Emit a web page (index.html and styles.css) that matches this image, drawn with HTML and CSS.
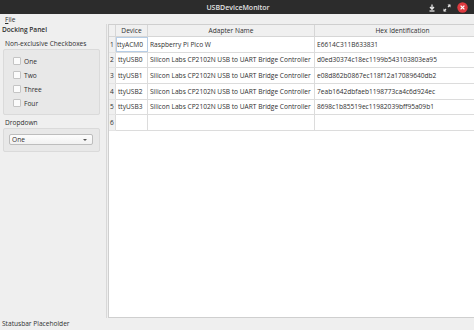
FILE: index.html
```html
<html>
<head>
    <link rel="stylesheet" href="styles.css">
</head>
<body>
    <div class="titlebar">
        <span class="title">USBDeviceMonitor</span>
        <div class="window-buttons">
            <svg class="wbtn" width="10" height="10" viewBox="0 0 10 10">
                <path d="M5 1.5 V6 M3 4 L5 6.2 L7 4" stroke="#e6e6e6" stroke-width="1.3" fill="none"/>
                <path d="M2.5 8 H7.5" stroke="#e6e6e6" stroke-width="1.3"/>
            </svg>
            <svg class="wbtn" width="10" height="10" viewBox="0 0 10 10">
                <path d="M5.5 1.5 H8.5 V4.5 Z M4.5 8.5 H1.5 V5.5 Z" fill="#e6e6e6"/>
                <path d="M8 2 L6 4 M2 8 L4 6" stroke="#e6e6e6" stroke-width="1.2"/>
            </svg>
            <svg class="wbtn" width="11" height="11" viewBox="0 0 11 11">
                <circle cx="5.5" cy="5.5" r="5.2" fill="#de3a3f"/>
                <path d="M3.6 3.6 L7.4 7.4 M7.4 3.6 L3.6 7.4" stroke="#fff" stroke-width="1.3"/>
            </svg>
        </div>
    </div>

    <div class="menubar"><span class="menu-item"><u>F</u>ile</span></div>

    <div class="main">
        <div class="dock">
            <div class="dock-title">Docking Panel</div>

            <div class="group-label">Non-exclusive Checkboxes</div>
            <div class="group checks">
                <label class="check"><span class="box"></span>One</label>
                <label class="check"><span class="box"></span>Two</label>
                <label class="check"><span class="box"></span>Three</label>
                <label class="check"><span class="box"></span>Four</label>
            </div>

            <div class="group-label">Dropdown</div>
            <div class="group combo-group">
                <div class="combo">
                    <span>One</span>
                    <span class="arrow"></span>
                </div>
            </div>
        </div>

        <div class="table-wrap">
            <table class="devices">
                <thead>
                    <tr>
                        <th class="rownum"></th>
                        <th class="col-device">Device</th>
                        <th class="col-name">Adapter Name</th>
                        <th class="col-hex">Hex Identification</th>
                    </tr>
                </thead>
                <tbody>
                    <tr>
                        <td class="rownum">1</td>
                        <td class="current">ttyACM0</td>
                        <td>Raspberry Pi Pico W</td>
                        <td>E6614C311B633831</td>
                    </tr>
                    <tr>
                        <td class="rownum">2</td>
                        <td>ttyUSB0</td>
                        <td>Silicon Labs CP2102N USB to UART Bridge Controller</td>
                        <td>d0ed30374c18ec1199b543103803ea95</td>
                    </tr>
                    <tr>
                        <td class="rownum">3</td>
                        <td>ttyUSB1</td>
                        <td>Silicon Labs CP2102N USB to UART Bridge Controller</td>
                        <td>e08d862b0867ec118f12a17089640db2</td>
                    </tr>
                    <tr>
                        <td class="rownum">4</td>
                        <td>ttyUSB2</td>
                        <td>Silicon Labs CP2102N USB to UART Bridge Controller</td>
                        <td>7eab1642dbfaeb1198773ca4c6d924ec</td>
                    </tr>
                    <tr>
                        <td class="rownum">5</td>
                        <td>ttyUSB3</td>
                        <td>Silicon Labs CP2102N USB to UART Bridge Controller</td>
                        <td>8698c1b85519ec11982039bff95a09b1</td>
                    </tr>
                    <tr>
                        <td class="rownum">6</td>
                        <td></td>
                        <td></td>
                        <td></td>
                    </tr>
                </tbody>
            </table>
        </div>
    </div>

    <div class="statusbar">Statusbar Placeholder</div>
</body>
</html>
```

FILE: styles.css
```css
body {
    margin: 0;
    width: 474px;
    height: 330px;
    overflow: hidden;
    font-family: "Open Sans", "Noto Sans", sans-serif;
    font-size: 6.6px;
    color: #2f2f2f;
    background-color: #efefef;
}

.titlebar {
    height: 14px;
    background-color: #2c2c2c;
    display: flex;
    align-items: center;
    justify-content: center;
    position: relative;
}

.title {
    color: #e2e2e2;
    font-weight: 600;
    font-size: 7px;
    margin-left: 2px;
}

.window-buttons {
    position: absolute;
    right: 6px;
    top: 2px;
    display: flex;
    align-items: center;
    gap: 5px;
}

.menubar {
    height: 10px;
    line-height: 11px;
    padding-left: 5px;
}

.menu-item u {
    text-decoration-thickness: 0.5px;
}

.main {
    display: flex;
    height: 294px;
}

.dock {
    width: 107px;
    border-right: 1px solid #d8d8d8;
    padding: 0 0 0 2px;
    box-sizing: border-box;
}

.dock-title {
    height: 12px;
    line-height: 12px;
    font-weight: 600;
}

.group-label {
    height: 13px;
    line-height: 16px;
    padding-left: 3px;
}

.group {
    margin: 0 6px 0 1px;
    background-color: #e8e8e8;
    border: 1px solid #dadada;
    border-radius: 2px;
}

.checks {
    height: 56px;
    padding: 4px 0;
    box-sizing: content-box;
    display: flex;
    flex-direction: column;
}

.check {
    display: flex;
    align-items: center;
    height: 14px;
    padding-left: 9px;
}

.box {
    width: 6px;
    height: 6px;
    background-color: #fbfbfb;
    border: 1px solid #c4c4c4;
    border-radius: 1px;
    margin-right: 3px;
}

.combo-group {
    padding: 5px 4px 0 5px;
    box-sizing: border-box;
    height: 24px;
}

.combo {
    height: 11px;
    width: 84px;
    box-sizing: border-box;
    border: 1px solid #bdbdbd;
    border-radius: 2px;
    background: linear-gradient(#fdfdfd, #f1f1f1);
    display: flex;
    align-items: center;
    justify-content: space-between;
    padding: 0 5px 0 2px;
}

.arrow {
    width: 0;
    height: 0;
    border-left: 2px solid transparent;
    border-right: 2px solid transparent;
    border-top: 2px solid #555;
}

.table-wrap {
    flex: 1;
    margin-left: 1px;
    border: 1px solid #cfcfcf;
    border-right: none;
    background-color: #fff;
    overflow: hidden;
}

.devices {
    border-collapse: collapse;
    table-layout: fixed;
    width: 380px;
    font: inherit;
    color: inherit;
}

.devices th {
    height: 11px;
    font-weight: normal;
    background-color: #f0f0f0;
    border-right: 1px solid #d6d6d6;
    border-bottom: 1px solid #d6d6d6;
    padding: 0;
    line-height: 11px;
    text-align: center;
}

.devices td {
    height: 15.67px;
    padding: 0 0 0 2px;
    border-right: 1px solid #dcdcdc;
    border-bottom: 1px solid #dcdcdc;
    white-space: nowrap;
    overflow: hidden;
    box-sizing: border-box;
}

.devices .rownum {
    width: 5px;
    background-color: #f0f0f0;
    padding: 0 0 0 1px;
}

.devices td.rownum {
    border-bottom-color: #e4e4e4;
}

.col-device {
    width: 31px;
}

.col-name {
    width: 166px;
}

.col-hex {
    width: 175px;
}

.devices td.current {
    outline: 1px solid #b6cde6;
    outline-offset: -1px;
    padding-left: 1px;
}

.statusbar {
    height: 12px;
    line-height: 12px;
    padding-left: 2px;
}
```
